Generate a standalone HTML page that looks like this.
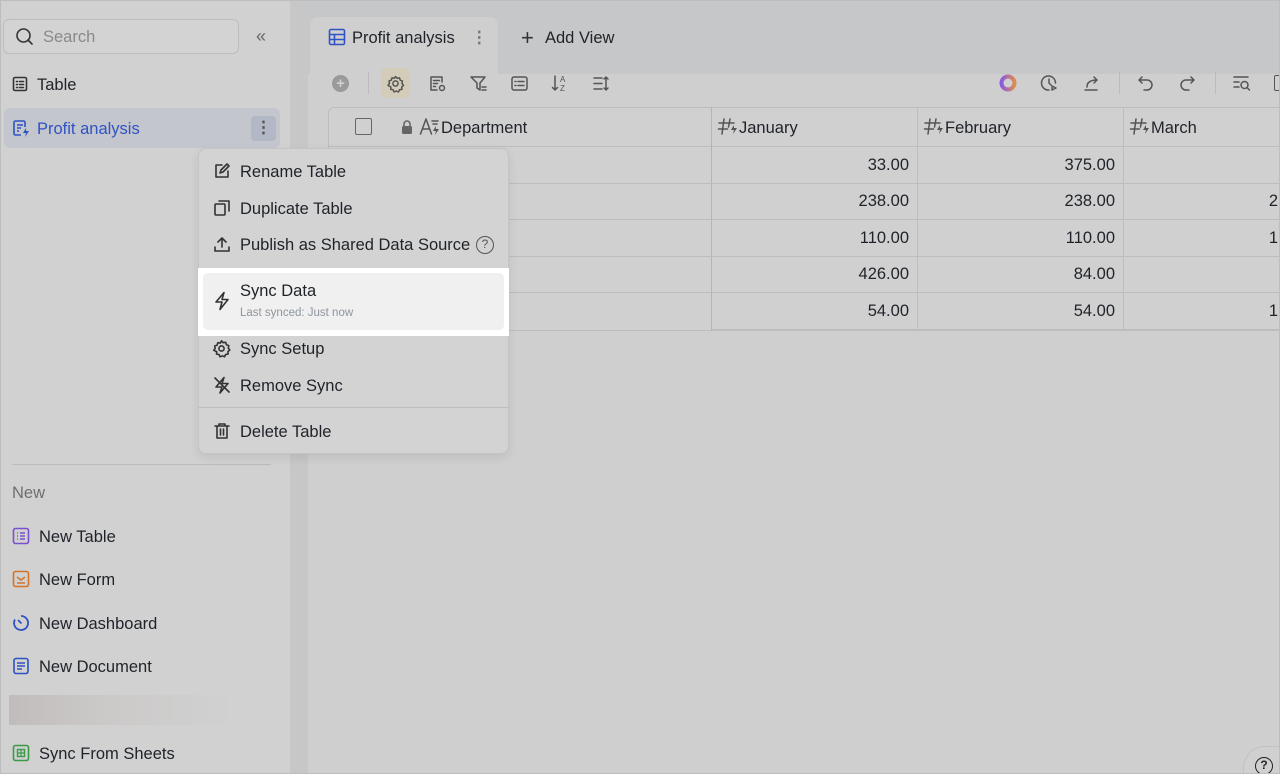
<!DOCTYPE html>
<html style="width:1280px;height:774px;overflow:hidden"><head><meta charset="utf-8"><style>
*{box-sizing:border-box;margin:0;padding:0}
body{width:1280px;height:774px;overflow:hidden;background:#cfcfcf;font-family:"Liberation Sans",sans-serif;color:#1f2329;position:relative;font-size:16.5px}
.abs{position:absolute}
svg{display:block}
.ic{stroke:#333;fill:none;stroke-width:1.6;stroke-linecap:round;stroke-linejoin:round}
.gi{stroke:#555;fill:none;stroke-width:1.5;stroke-linecap:round;stroke-linejoin:round}
.cell{position:absolute;border-bottom:1px solid #bdbdbd;height:37px;text-align:right;padding-right:8px;line-height:37px;font-size:16.5px;color:#1f2329}
.t{margin-top:1px}
</style></head><body>
<div class="abs" style="left:0;top:0;width:1280px;height:774px;border:1px solid #bdbdbd;z-index:50;pointer-events:none"></div>
<div class="abs" style="left:0;top:0;width:290px;height:774px;background:#d1d1d1"></div>
<div class="abs" style="left:290px;top:0;width:18px;height:774px;background:#c7c7c7"></div>
<div class="abs" style="left:3px;top:19px;width:236px;height:35px;border:1px solid #bdbdbd;border-radius:6px;background:#d3d3d3"></div>
<svg class="abs" style="left:15px;top:27px" width="20" height="20"><circle cx="8.5" cy="8.5" r="6.5" class="ic"/><path d="M13 13l4 4" class="ic"/></svg>
<div class="abs" style="left:43px;top:28px;color:#8a8a8a">Search</div>
<div class="abs" style="left:256px;top:26px;color:#666;font-size:18px">«</div>
<svg class="abs" style="left:12px;top:76px" width="17" height="17"><rect x="1.5" y="1.5" width="13" height="13" rx="1.5" class="ic"/><path d="M4.5 5.5h1M7.5 5.5h4M4.5 8.5h1M7.5 8.5h4M4.5 11.5h1M7.5 11.5h4" class="ic"/></svg>
<div class="abs" style="left:37px;top:76px">Table</div>
<div class="abs" style="left:4px;top:108px;width:276px;height:40px;background:#c3c6cd;border-radius:6px"></div>
<svg class="abs" style="left:12px;top:119px" width="19" height="19"><path d="M13 8V3.5a1.5 1.5 0 0 0-1.5-1.5h-8A1.5 1.5 0 0 0 2 3.5v11A1.5 1.5 0 0 0 3.5 16H9" style="stroke:#2f52c4;fill:none;stroke-width:1.6"/><path d="M5 6h6M5 9h4M5 12h2" style="stroke:#2f52c4;fill:none;stroke-width:1.6"/><path d="M14 9l-3 5h3l-1 4 4-6h-3z" fill="#2f52c4"/></svg>
<div class="abs" style="left:37px;top:120px;color:#2f52c4">Profit analysis</div>
<div class="abs" style="left:251px;top:116px;width:25px;height:25px;background:#b3b8c6;border-radius:4px;color:#555;text-align:center;line-height:24px;font-weight:bold">⋮</div>
<div class="abs" style="left:12px;top:464px;width:259px;height:1px;background:#bcbcbc"></div>
<div class="abs" style="left:12px;top:484px;color:#6f6f6f">New</div>
<svg class="abs" style="left:12px;top:527px" width="18" height="18"><rect x="1.5" y="1.5" width="15" height="15" rx="2" style="stroke:#7a4fd0;fill:none;stroke-width:1.6"/><path d="M5 6h1M8 6h5M5 9h1M8 9h5M5 12h1M8 12h5" style="stroke:#7a4fd0;stroke-width:1.6"/></svg>
<div class="abs" style="left:39px;top:528px">New Table</div>
<svg class="abs" style="left:12px;top:570px" width="18" height="18"><rect x="1.5" y="1.5" width="15" height="15" rx="2" style="stroke:#d3742a;fill:none;stroke-width:1.6"/><path d="M5 7l4 3 4-3M5 13h8" style="stroke:#d3742a;fill:none;stroke-width:1.6"/></svg>
<div class="abs" style="left:39px;top:571px">New Form</div>
<svg class="abs" style="left:12px;top:614px" width="18" height="18"><path d="M9 2a7 7 0 1 1-6 3.5" style="stroke:#2f52c4;fill:none;stroke-width:1.8"/><path d="M6 6l3.5 3.5" style="stroke:#2f52c4;stroke-width:1.8"/></svg>
<div class="abs" style="left:39px;top:615px">New Dashboard</div>
<svg class="abs" style="left:12px;top:657px" width="18" height="18"><rect x="2" y="1.5" width="14" height="15" rx="2" style="stroke:#2f52c4;fill:none;stroke-width:1.6"/><path d="M5 6h8M5 9h8M5 12h5" style="stroke:#2f52c4;stroke-width:1.6"/></svg>
<div class="abs" style="left:39px;top:658px">New Document</div>
<div class="abs" style="left:9px;top:695px;width:225px;height:30px;background:linear-gradient(90deg,#c0bcbb,#cbc9c8 40%,#d1d1d1)"></div>
<svg class="abs" style="left:12px;top:744px" width="18" height="18"><rect x="1.5" y="1.5" width="15" height="15" rx="2" style="stroke:#3a9a46;fill:none;stroke-width:1.6"/><rect x="5.5" y="5.5" width="7" height="7" style="stroke:#3a9a46;fill:none;stroke-width:1.4"/><path d="M9 5.5v7M5.5 9h7" style="stroke:#3a9a46;stroke-width:1.2"/></svg>
<div class="abs" style="left:39px;top:745px">Sync From Sheets</div>
<div class="abs" style="left:308px;top:0;width:972px;height:74px;background:#c6c7c8"></div>
<div class="abs" style="left:310px;top:17px;width:188px;height:60px;background:#cfcfcf;border-radius:8px 8px 0 0"></div>
<div class="abs" style="left:308px;top:74px;width:972px;height:700px;background:#cfcfcf"></div>
<svg class="abs" style="left:328px;top:28px" width="18" height="18"><rect x="1.5" y="1.5" width="15" height="15" rx="1.5" style="stroke:#2f52c4;fill:none;stroke-width:1.6"/><path d="M1.5 6.5h15M1.5 11.5h15M6.5 6.5v10" style="stroke:#2f52c4;stroke-width:1.6"/></svg>
<div class="abs" style="left:352px;top:29px">Profit analysis</div>
<div class="abs" style="left:471px;top:28px;color:#777;font-weight:bold">⋮</div>
<div class="abs" style="left:521px;top:25px;font-size:22px;color:#333">+</div>
<div class="abs" style="left:545px;top:29px">Add View</div>
<div class="abs" style="left:332px;top:75px;width:17px;height:17px;border-radius:50%;background:#9a9a9a;color:#d0d0d0;text-align:center;line-height:17px;font-weight:bold;font-size:15px">+</div>
<div class="abs" style="left:368px;top:72px;width:1px;height:22px;background:#bbb"></div>
<div class="abs" style="left:381px;top:68px;width:29px;height:30px;background:#d2ccb8;border-radius:5px"></div>
<svg class="abs" style="left:386px;top:74px" width="19" height="19"><circle cx="9.5" cy="9.5" r="2.6" class="gi"/><path d="M9.5 2.5l1.6 1.8 2.4-.4.7 2.3 2.3.9-.5 2.4 1.5 1.9-1.8 1.6.2 2.4-2.4.4-1 2.2-2.2-1-2.2 1-1-2.2-2.4-.4.2-2.4L2 11.3l1.5-1.9L3 7l2.3-.9.7-2.3 2.4.4z" class="gi"/></svg>
<svg class="abs" style="left:428px;top:74px" width="19" height="19"><path d="M14 8V3H3v13h6M5.5 6.5h6M5.5 9.5h4M5.5 12.5h2" class="gi"/><circle cx="14" cy="14" r="2.5" class="gi"/></svg>
<svg class="abs" style="left:469px;top:74px" width="19" height="19"><path d="M2 3h14l-5 6v7l-3-2V9z" class="gi"/><path d="M13 13h4M13 16h4" class="gi"/></svg>
<svg class="abs" style="left:510px;top:74px" width="19" height="19"><rect x="2" y="3" width="15" height="13" rx="2" class="gi"/><path d="M5 7.5h1M8 7.5h6M5 11.5h1M8 11.5h6" class="gi"/></svg>
<svg class="abs" style="left:551px;top:73px" width="19" height="20"><path d="M4 3v14M1.5 14.5L4 17l2.5-2.5" class="gi"/><text x="9" y="9" font-size="8" fill="#555" font-family="Liberation Sans">A</text><text x="9" y="18" font-size="8" fill="#555" font-family="Liberation Sans">Z</text></svg>
<svg class="abs" style="left:592px;top:74px" width="19" height="19"><path d="M2 4h8M2 9.5h8M2 15h8M14 3v13M12 5l2-2 2 2M12 14l2 2 2-2" class="gi"/></svg>
<svg class="abs" style="left:998px;top:73px" width="20" height="20"><defs><linearGradient id="g"><stop offset="0" stop-color="#8a5ce0"/><stop offset="1" stop-color="#e08a50"/></linearGradient></defs><circle cx="10" cy="10" r="6.5" style="stroke:url(#g);fill:none;stroke-width:4"/></svg>
<svg class="abs" style="left:1039px;top:73px" width="20" height="20"><path d="M16.5 10A7 7 0 1 0 10 17" class="gi"/><path d="M10 6v4l2 2M13 13l4 2-4 2z" class="gi"/></svg>
<svg class="abs" style="left:1082px;top:73px" width="20" height="20"><path d="M3 17h12M5 14c0-5 4-7 10-7M12 4l3 3-3 3" class="gi"/></svg>
<div class="abs" style="left:1119px;top:72px;width:1px;height:22px;background:#bbb"></div>
<svg class="abs" style="left:1136px;top:73px" width="20" height="20"><path d="M6 4L3 7l3 3M3 7h8a5 5 0 0 1 0 10H8" class="gi"/></svg>
<svg class="abs" style="left:1177px;top:73px" width="20" height="20"><path d="M14 4l3 3-3 3M17 7H9a5 5 0 0 0 0 10h3" class="gi"/></svg>
<div class="abs" style="left:1215px;top:72px;width:1px;height:22px;background:#bbb"></div>
<svg class="abs" style="left:1232px;top:73px" width="20" height="20"><path d="M2 4h14M2 9h5M2 14h5" class="gi"/><circle cx="12.5" cy="12" r="3.5" class="gi"/><path d="M15 14.5l2.5 2.5" class="gi"/></svg>
<div class="abs" style="left:1274px;top:75px;width:8px;height:16px;border:1.5px solid #555;border-radius:2px"></div>
<div class="abs" style="left:328px;top:107px;width:960px;height:224px;border:1px solid #bdbdbd;border-radius:6px 0 0 0;background:#d0d0d0"></div>
<div class="abs" style="left:329px;top:146px;width:951px;height:1px;background:#bdbdbd"></div>
<div class="abs" style="left:711px;top:107px;width:1px;height:224px;background:#b4b4b4"></div>
<div class="abs" style="left:917px;top:107px;width:1px;height:224px;background:#bdbdbd"></div>
<div class="abs" style="left:1123px;top:107px;width:1px;height:224px;background:#bdbdbd"></div>
<div class="abs" style="left:355px;top:118px;width:17px;height:17px;border:1.6px solid #666;border-radius:2px"></div>
<svg class="abs" style="left:400px;top:119px" width="14" height="16"><rect x="2" y="7" width="10" height="8" rx="1.5" fill="#666"/><path d="M4 7V5a3 3 0 0 1 6 0v2" style="stroke:#666;fill:none;stroke-width:1.6"/></svg>
<svg class="abs" style="left:419px;top:116px" width="22" height="22"><path d="M1.5 18L7 3l5.5 15M3.5 13h7" class="gi"/><path d="M13 5h6M14 8h4" class="gi"/><path d="M17 10l-3 5h3l-1 4 4-6h-3z" fill="#555"/></svg>
<div class="abs" style="left:441px;top:119px">Department</div>
<svg class="abs" style="left:717px;top:116px" width="22" height="22"><path d="M7 3L5 18M13 3l-1.5 8M2 7h15M1.5 13h9" class="gi"/><path d="M17 9l-3 5h3l-1 4 4-6h-3z" fill="#555"/></svg>
<div class="abs" style="left:739px;top:119px">January</div>
<svg class="abs" style="left:923px;top:116px" width="22" height="22"><path d="M7 3L5 18M13 3l-1.5 8M2 7h15M1.5 13h9" class="gi"/><path d="M17 9l-3 5h3l-1 4 4-6h-3z" fill="#555"/></svg>
<div class="abs" style="left:945px;top:119px">February</div>
<svg class="abs" style="left:1129px;top:116px" width="22" height="22"><path d="M7 3L5 18M13 3l-1.5 8M2 7h15M1.5 13h9" class="gi"/><path d="M17 9l-3 5h3l-1 4 4-6h-3z" fill="#555"/></svg>
<div class="abs" style="left:1151px;top:119px">March</div>
<div class="cell" style="left:329px;top:147px;width:382px"></div>
<div class="cell" style="left:329px;top:183px;width:382px"></div>
<div class="cell" style="left:329px;top:220px;width:382px"></div>
<div class="cell" style="left:329px;top:256px;width:382px"></div>
<div class="cell" style="left:711px;top:147px;width:206px">33.00</div>
<div class="cell" style="left:917px;top:147px;width:206px">375.00</div>
<div class="cell" style="left:1123px;top:147px;width:157px"></div>
<div class="cell" style="left:711px;top:183px;width:206px">238.00</div>
<div class="cell" style="left:917px;top:183px;width:206px">238.00</div>
<div class="cell" style="left:1123px;top:183px;width:157px;padding-right:2px">2</div>
<div class="cell" style="left:711px;top:220px;width:206px">110.00</div>
<div class="cell" style="left:917px;top:220px;width:206px">110.00</div>
<div class="cell" style="left:1123px;top:220px;width:157px;padding-right:2px">1</div>
<div class="cell" style="left:711px;top:256px;width:206px">426.00</div>
<div class="cell" style="left:917px;top:256px;width:206px">84.00</div>
<div class="cell" style="left:1123px;top:256px;width:157px"></div>
<div class="cell" style="left:711px;top:293px;width:206px">54.00</div>
<div class="cell" style="left:917px;top:293px;width:206px">54.00</div>
<div class="cell" style="left:1123px;top:293px;width:157px;padding-right:2px">1</div>
<div class="abs" style="left:1243px;top:746px;width:44px;height:28px;border-radius:22px 0 0 0;border:1px solid #c2c2c2;border-bottom:none;border-right:none;background:#d0d0d0"></div>
<div class="abs" style="left:1255px;top:757px;width:18px;height:18px;border-radius:50%;border:1.8px solid #222;text-align:center;font-size:12px;font-weight:bold;line-height:15px">?</div>
<div class="abs" style="left:198px;top:148px;width:311px;height:306px;background:#d3d3d3;border:1px solid #c4c4c4;border-radius:8px;box-shadow:0 4px 10px rgba(0,0,0,0.08)"></div>
<svg class="abs" style="left:213px;top:162px" width="18" height="18"><path d="M9 3H3v12h12V9" class="ic"/><path d="M7 11l1-3 6-6 2 2-6 6z" class="ic"/></svg>
<div class="abs" style="left:240px;top:163px">Rename Table</div>
<svg class="abs" style="left:213px;top:199px" width="18" height="18"><rect x="2" y="5" width="10" height="11" rx="1" class="ic"/><path d="M6 2h10v10" class="ic"/></svg>
<div class="abs" style="left:240px;top:200px">Duplicate Table</div>
<svg class="abs" style="left:213px;top:235px" width="18" height="18"><path d="M9 12V3M5 7l4-4 4 4M2 12v4h14v-4" class="ic"/></svg>
<div class="abs" style="left:240px;top:236px">Publish as Shared Data Source</div>
<div class="abs" style="left:476px;top:236px;width:18px;height:18px;border:1.5px solid #555;border-radius:50%;text-align:center;font-size:12px;line-height:15px;color:#555">?</div>
<div class="abs" style="left:198px;top:268px;width:311px;height:68px;background:#fff"></div>
<div class="abs" style="left:203px;top:273px;width:301px;height:57px;background:#eff0ef;border-radius:5px"></div>
<svg class="abs" style="left:213px;top:291px" width="18" height="20"><path d="M11 1.5L3 11h6l-2 7.5 8-10H9z" class="ic"/></svg>
<div class="abs" style="left:240px;top:282px">Sync Data</div>
<div class="abs" style="left:240px;top:307px;font-size:11.5px;color:#8f959e">Last synced: Just now</div>
<svg class="abs" style="left:212px;top:339px" width="19" height="19"><circle cx="9.5" cy="9.5" r="2.6" class="ic"/><path d="M9.5 1.8l1.7 1.9 2.5-.4.7 2.4 2.4.9-.5 2.5 1.5 1.9-1.9 1.6.2 2.5-2.5.4-1 2.3-2.3-1-2.3 1-1-2.3-2.5-.4.2-2.5L1.7 11.3l1.5-1.9L2.7 7l2.4-.9.7-2.4 2.5.4z" class="ic"/></svg>
<div class="abs" style="left:240px;top:340px">Sync Setup</div>
<svg class="abs" style="left:213px;top:376px" width="18" height="18"><path d="M11 1.5L3 11h6l-2 6 8-9.5H9z" class="ic"/><path d="M2 2l14 14" class="ic"/></svg>
<div class="abs" style="left:240px;top:377px">Remove Sync</div>
<div class="abs" style="left:199px;top:407px;width:309px;height:1px;background:#bdbdbd"></div>
<svg class="abs" style="left:213px;top:422px" width="18" height="18"><path d="M2 4h14M6 4V2h6v2M4 4v12h10V4M7.5 7v6M10.5 7v6" class="ic"/></svg>
<div class="abs" style="left:240px;top:423px">Delete Table</div>
</body></html>
